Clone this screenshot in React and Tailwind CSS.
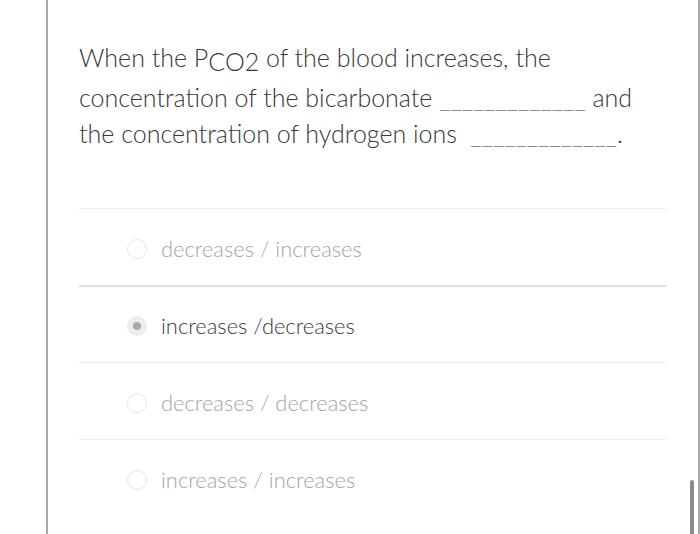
import React from "react";

const options = [
  { label: "decreases / increases", selected: false },
  { label: "increases /decreases", selected: true },
  { label: "decreases / decreases", selected: false },
  { label: "increases / increases", selected: false },
];

function Radio({ selected }) {
  if (selected) {
    return (
      <span className="flex h-[20px] w-[20px] shrink-0 items-center justify-center rounded-full bg-[#ececec]">
        <span className="h-[8px] w-[8px] rounded-full bg-[#a9a9a9]" />
      </span>
    );
  }
  return <span className="block h-[20px] w-[20px] shrink-0 rounded-full border-[1.5px] border-[#e6e6e6] bg-white" />;
}

export default function App() {
  return (
    <div className="relative h-[534px] w-[700px] overflow-hidden bg-white" style={{ fontFamily: "Lato, 'Open Sans', sans-serif" }}>
      <div className="ml-[46px] h-full border-l-2 border-r-2 border-[#a8a8a8] pl-[31px] pr-[32px] pt-[39px]">
        <p className="whitespace-nowrap text-[25px] font-light leading-[36px] text-[#383838]">
          When the P<span className="align-[-4px]">CO2</span> of the blood increases, the
          <br />
          concentration of the bicarbonate <span className="text-[#8f8f8f]">_____________</span> and
          <br />
          the concentration of hydrogen ions{"\u00a0 "}
          <span className="text-[#8f8f8f]">_____________</span>.
        </p>
        <div className="mt-[57px]">
          {options.map((o, i) => (
            <div
              key={i}
              className={
                "flex h-[77px] items-center pl-[48px] " +
                (i === 1 ? "border-t-2 border-[#dedede]" : "border-t border-[#ededed]")
              }
            >
              <div className="mt-[3px] flex items-center gap-[14px]">
                <Radio selected={o.selected} />
                <span className={"text-[21.9px] font-light leading-[24px] " + (o.selected ? "text-[#383838]" : "text-[#a3a3a3]")}>{o.label}</span>
              </div>
            </div>
          ))}
        </div>
      </div>
      <div className="absolute left-[690px] top-[480px] h-[60px] w-[4px] rounded-t-full bg-[#8a8a8a]" />
    </div>
  );
}
